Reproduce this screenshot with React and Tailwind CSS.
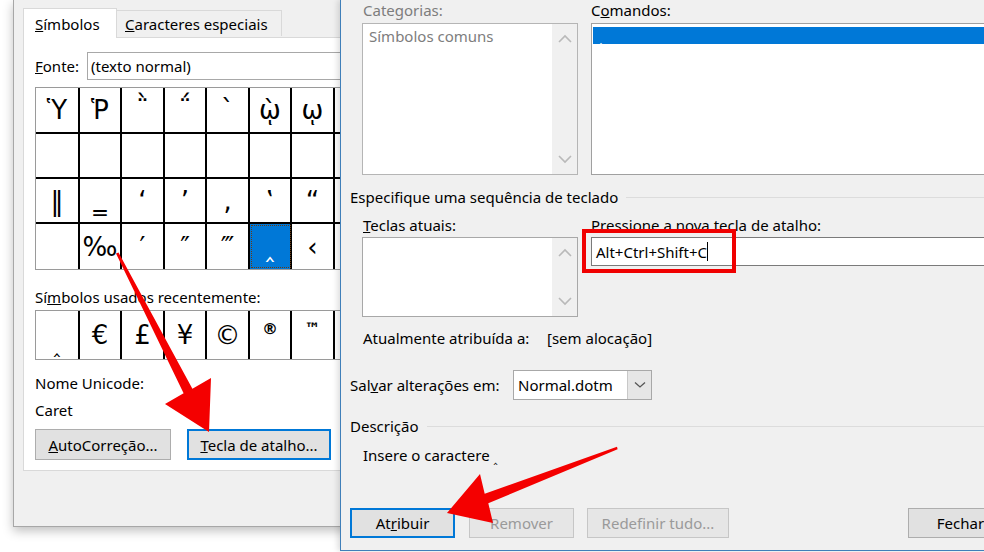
import React from 'react';

const row1 = ['Ὑ', 'Ῥ', '῭', '΅', '`', 'ῲ', 'ῳ', 'ῴ', 'ῶ'];
const row2 = [' ', ' ', ' ', ' ', ' ', ' ', ' ', ' ', ' '];
const row3 = ['‖', '‗', '‘', '’', '‚', '‛', '“', '”', '„'];
const row4 = [' ', '‰', '′', '″', '‴', '‸', '‹', '›', '‼'];
const recent = ['‸', '€', '£', '¥', '©', '®', '™', '±', '≠'];
const widths = [44, 42, 43, 42, 43, 42, 43, 43, 43];

function Cell({ ch, w, selected, className }) {
  return (
    <div
      style={{ width: w }}
      className={`shrink-0 h-full border-r-2 border-black flex items-center justify-center ${
        selected ? 'bg-[#0078d7] text-white outline outline-1 outline-dotted outline-[#6b3b10] -outline-offset-2' : 'text-black'
      } ${className || ''}`}
    >
      {ch}
    </div>
  );
}

function SymbolRow({ chars, h, last, selectedIndex }) {
  return (
    <div style={{ height: h }} className={`flex ${last ? '' : 'border-b-2 border-black'}`}>
      {chars.map((c, i) => (
        <Cell key={i} ch={c} w={widths[i]} selected={i === selectedIndex} />
      ))}
    </div>
  );
}

function Chevron({ up }) {
  return (
    <svg width="14" height="9" viewBox="0 0 14 9">
      <polyline
        points={up ? '1,8 7,2 13,8' : '1,1 7,7 13,1'}
        fill="none"
        stroke="#b9b9b9"
        strokeWidth="1.6"
      />
    </svg>
  );
}

function ListBox({ w, h, children, scroll, className }) {
  return (
    <div style={{ width: w, height: h }} className={`shrink-0 flex border border-[#a8a8a8] bg-white ${className || ''}`}>
      <div className="flex-1 overflow-hidden">{children}</div>
      {scroll && (
        <div className="w-[25px] bg-[#f0f0f0] flex flex-col items-center justify-between py-[10px]">
          <Chevron up />
          <Chevron />
        </div>
      )}
    </div>
  );
}

function Btn({ children, w, focus, disabled }) {
  return (
    <div
      style={{ width: w }}
      className={`shrink-0 h-full flex items-center justify-center bg-[#e1e1e1] ${
        focus ? 'border-2 border-[#0078d7]' : disabled ? 'border border-[#c6c6c6] bg-[#e6e6e6] text-[#9a9a9a]' : 'border border-[#adadad]'
      }`}
    >
      {children}
    </div>
  );
}

function GroupTitle({ children }) {
  return (
    <div className="flex items-center gap-[8px] h-[20px]">
      <span className="shrink-0">{children}</span>
      <div className="flex-1 h-px bg-[#dcdcdc]" />
    </div>
  );
}

export default function App() {
  return (
    <div className="relative w-[984px] h-[552px] overflow-hidden bg-white flex text-[15px] leading-[20px] text-black font-['Noto_Sans','Open_Sans',sans-serif]">
      {/* Symbol dialog (behind) */}
      <div className="w-[340px] shrink-0 h-[552px] overflow-hidden pl-[13px]">
        <div className="w-[420px] h-[527px] border border-t-0 border-[#a7a7a7] bg-[#f0f0f0] shadow-[0_4px_10px_rgba(0,0,0,0.25)]">
          <div className="flex items-end pl-[9px] h-[37px]">
            <div className="relative z-10 -mb-px h-[30px] w-[94px] border border-b-0 border-[#d9d9d9] bg-white flex items-center pl-[11px]">
              <span><u>S</u>ímbolos</span>
            </div>
            <div className="mb-px h-[26px] w-[165px] border border-l-0 border-b-0 border-[#d9d9d9] bg-[#f0f0f0] flex items-center pl-[8px]">
              <span><u>C</u>aracteres especiais</span>
            </div>
          </div>
          <div className="ml-[9px] h-[434px] border border-[#d9d9d9] bg-white pl-[11px] flex flex-col">
            <div className="mt-[14px] h-[28px] flex items-center">
              <span className="w-[52px] shrink-0"><u>F</u>onte:</span>
              <div className="flex-1 h-full border border-[#a8a8a8] flex items-center pl-[3px]">(texto normal)</div>
            </div>
            <div className="mt-[7px] border border-[#9a9a9a] border-r-0 font-['DejaVu_Sans',sans-serif] text-[26px] leading-none">
              <SymbolRow chars={row1} h={46} />
              <SymbolRow chars={row2} h={45} />
              <SymbolRow chars={row3} h={45} />
              <SymbolRow chars={row4} h={45} last selectedIndex={5} />
            </div>
            <div className="mt-[17px] h-[20px]">Sí<u>m</u>bolos usados recentemente:</div>
            <div className="mt-[3px] h-[50px] border border-[#9a9a9a] border-r-0 flex font-['DejaVu_Sans',sans-serif] text-[26px] leading-none">
              {recent.map((c, i) => (
                <Cell
                  key={i}
                  ch={c}
                  w={widths[i]}
                  className={i === 0 ? 'items-end pb-[4px] text-[20px]' : i === 5 || i === 6 ? 'items-start pt-[10px] text-[16px] font-bold' : ''}
                />
              ))}
            </div>
            <div className="mt-[13px]">Nome Unicode:</div>
            <div className="mt-[7px]">Caret</div>
            <div className="mt-[9px] h-[31px] flex gap-[16px]">
              <Btn w={136}><span><u>A</u>utoCorreção...</span></Btn>
              <Btn w={144} focus><span><u>T</u>ecla de atalho...</span></Btn>
            </div>
          </div>
        </div>
      </div>

      {/* Customize keyboard dialog */}
      <div className="w-[680px] shrink-0 h-[551px] border-l border-b border-[#3f7fb9] bg-[#f0f0f0] pl-[9px] flex flex-col shadow-[-2px_0_6px_rgba(0,0,0,0.15)]">
        <div className="flex pl-[13px] h-[20px]">
          <span className="w-[228px] shrink-0 text-[#7d7d7d]">Categorias:</span>
          <span>C<u>o</u>mandos:</span>
        </div>
        <div className="mt-[3px] flex pl-[12px] gap-[13px]">
          <ListBox w={216} h={152} scroll className="border-[#b5b5b5]">
            <div className="pl-[6px] pt-[2px] text-[#7d7d7d]">Símbolos comuns</div>
          </ListBox>
          <div className="w-[420px] shrink-0 h-[152px] border border-[#a0a0a0] bg-white pt-[3px] pl-[1px]">
            <div className="h-[17px] bg-[#0078d7] text-white text-[11px] leading-none flex items-end pl-[6px] font-['DejaVu_Sans',sans-serif]">‸</div>
          </div>
        </div>
        <div className="mt-[12px]">
          <GroupTitle>Especifique uma sequência de teclado</GroupTitle>
        </div>
        <div className="mt-[8px] flex pl-[13px] h-[20px]">
          <span className="w-[228px] shrink-0"><u>T</u>eclas atuais:</span>
          <span>Pressione a nova tecla de atalho:</span>
        </div>
        <div className="mt-[2px] flex pl-[12px] gap-[13px] items-start">
          <ListBox w={216} h={80} scroll />
          <div className="w-[420px] shrink-0 h-[29px] border border-[#7a7a7a] bg-white flex items-center pl-[4px]">
            <span>Alt+Ctrl+Shift+C</span>
            <span className="w-px h-[19px] bg-black" />
          </div>
        </div>
        <div className="mt-[11px] flex pl-[13px]">
          <span className="w-[184px] shrink-0">Atualmente atribuída a:</span>
          <span>[sem alocação]</span>
        </div>
        <div className="mt-[22px] flex items-center h-[30px]">
          <span className="w-[163px] shrink-0">Sal<u>v</u>ar alterações em:</span>
          <div className="w-[139px] shrink-0 h-full border border-[#a8a8a8] bg-white flex">
            <div className="flex-1 flex items-center pl-[4px]">Normal.dotm</div>
            <div className="w-[24px] bg-[#e6e6e6] border-l border-[#c8c8c8] flex items-center justify-center">
              <svg width="12" height="8" viewBox="0 0 12 8">
                <polyline points="1,1.5 6,6 11,1.5" fill="none" stroke="#555" strokeWidth="1.3" />
              </svg>
            </div>
          </div>
        </div>
        <div className="mt-[16px]">
          <GroupTitle>Descrição</GroupTitle>
        </div>
        <div className="mt-[9px] pl-[13px] flex items-end">
          <span>Insere o caractere</span>
          <span className="ml-[4px] text-[12px] leading-[14px] font-['DejaVu_Sans',sans-serif]">‸</span>
        </div>
        <div className="mt-[43px] h-[30px] flex">
          <Btn w={105} focus><span>At<u>r</u>ibuir</span></Btn>
          <div className="w-[14px] shrink-0" />
          <Btn w={105} disabled>Remover</Btn>
          <div className="w-[13px] shrink-0" />
          <Btn w={142} disabled>Redefinir tudo...</Btn>
          <div className="w-[179px] shrink-0" />
          <Btn w={105}>Fechar</Btn>
        </div>
      </div>

      {/* highlight box */}
      <div className="absolute left-[582px] top-[229px] w-[154px] h-[44px] border-[4px] border-[#f00000]" />

      {/* arrows */}
      <svg className="absolute inset-0 pointer-events-none" width="984" height="552" viewBox="0 0 984 552">
        <polygon
          fill="#f40000"
          points="116,253.5 183.6,393.3 165,404 209,432 211,378 192.4,388.7 118.5,252.5"
        />
        <polygon
          fill="#f40000"
          points="617,446.8 484.7,493.8 480,474 447,513 493,523 488.3,503.2 617.6,449.2"
        />
      </svg>
    </div>
  );
}
